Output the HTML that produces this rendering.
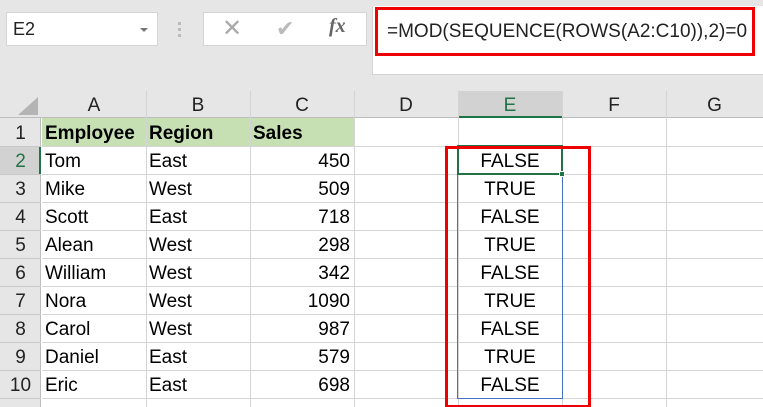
<!DOCTYPE html>
<html><head><meta charset="utf-8"><style>
*{margin:0;padding:0;box-sizing:border-box}
html,body{width:763px;height:407px;overflow:hidden}
body{background:#fff;font-family:"Liberation Sans","Noto Sans CJK SC",sans-serif;position:relative}
.abs{position:absolute}
.cell{position:absolute;height:28px;line-height:32px;font-size:19px;color:#000;white-space:nowrap}
</style></head><body>
<div class="abs" style="left:0;top:0;width:763px;height:91px;background:#e6e6e6"></div>
<div class="abs" style="left:6px;top:12px;width:152px;height:34px;background:#fff;border:1px solid #d4d4d4"></div>
<div class="abs" style="left:13px;top:12px;line-height:34px;font-size:18px;color:#222">E2</div>
<div class="abs" style="left:140px;top:28px;width:0;height:0;border-left:4px solid transparent;border-right:4px solid transparent;border-top:4px solid #777"></div>
<div class="abs" style="left:178px;top:22px;width:3px;height:3px;background:#bbb;box-shadow:0 6px 0 #bbb,0 12px 0 #bbb"></div>
<div class="abs" style="left:203px;top:12px;width:164px;height:34px;background:#fff;border:1px solid #d4d4d4"></div>
<div class="abs" style="left:222px;top:17px;font-size:24px;color:#aaa;line-height:24px">✕</div>
<div class="abs" style="left:276px;top:17px;font-size:22px;color:#bbb;line-height:24px">✔</div>
<div class="abs" style="left:329px;top:15px;font-size:20px;color:#666;font-family:'Liberation Serif',serif;font-style:italic;font-weight:bold">fx</div>
<div class="abs" style="left:372px;top:6px;width:391px;height:69px;background:#fff;border-left:1px solid #d4d4d4;border-bottom:1px solid #d4d4d4"></div>
<div class="abs" style="left:375px;top:7px;width:380px;height:49px;border:3px solid #e00"></div>
<div class="abs" style="left:387px;top:18px;font-size:19px;color:#222;line-height:28px">=MOD(SEQUENCE(ROWS(A2:C10)),2)=0</div>
<div class="abs" style="left:0;top:91px;width:763px;height:27px;background:#e6e6e6;border-bottom:1px solid #bdbdbd"></div>
<div class="abs" style="left:458px;top:91px;width:104px;height:27px;background:#d2d2d2;border-bottom:2px solid #217346"></div>
<div class="abs" style="left:18px;top:97px;width:0;height:0;border-left:20px solid transparent;border-bottom:18px solid #b4b4b4"></div>
<div class="abs" style="left:0;top:118px;width:41px;height:289px;background:#e6e6e6;border-right:1px solid #bdbdbd"></div>
<div class="abs" style="left:0;top:146px;width:41px;height:28px;background:#d2d2d2;border-right:2px solid #217346"></div>
<div class="abs" style="left:42px;top:118px;width:312px;height:28px;background:#c6e0b4"></div>
<div id="g"></div>
<script>
var cols=[42,146,250,354,458,562,666,763],L="ABCDEFG",h="";
for(var i=0;i<7;i++){h+='<div class="cell" style="left:'+cols[i]+'px;top:91px;width:'+(cols[i+1]-cols[i])+'px;height:27px;line-height:30px;text-align:center;font-size:19px;color:'+(i==4?'#217346':'#222')+'">'+L[i]+'</div>';
h+='<div class="abs" style="left:'+(cols[i+1])+'px;top:91px;width:1px;height:316px;background:'+(i<6?'#d4d4d4':'transparent')+'"></div>';}
var d=[["Employee","Region","Sales"],["Tom","East",450],["Mike","West",509],["Scott","East",718],["Alean","West",298],["William","West",342],["Nora","West",1090],["Carol","West",987],["Daniel","East",579],["Eric","East",698]];
for(var r=0;r<11;r++){var t=118+28*r;
h+='<div class="abs" style="left:42px;top:'+(t+28)+'px;width:721px;height:1px;background:#d4d4d4"></div>';
h+='<div class="abs" style="left:0;top:'+(t+28)+'px;width:41px;height:1px;background:#c8c8c8"></div>';
if(r<10){h+='<div class="cell" style="left:0;top:'+t+'px;width:41px;text-align:center;font-size:19px;color:'+(r==1?'#217346':'#222')+'">'+(r+1)+'</div>';
var b=r==0?'font-weight:bold;':'';
h+='<div class="cell" style="'+b+'left:45px;top:'+t+'px">'+d[r][0]+'</div>';
h+='<div class="cell" style="'+b+'left:149px;top:'+t+'px">'+d[r][1]+'</div>';
h+='<div class="cell" style="'+b+(r==0?'left:253px;':'left:250px;width:100px;text-align:right;')+'top:'+t+'px">'+d[r][2]+'</div>';
if(r>0)h+='<div class="cell" style="left:458px;top:'+t+'px;width:104px;text-align:center">'+(r%2?'FALSE':'TRUE')+'</div>';}}
document.getElementById('g').innerHTML=h;
</script>
<div class="abs" style="left:457px;top:146px;width:106px;height:253px;border:1px solid #4472c4"></div>
<div class="abs" style="left:457px;top:145px;width:106px;height:30px;border:2px solid #217346"></div>
<div class="abs" style="left:559px;top:171px;width:6px;height:6px;background:#217346;border:1px solid #fff"></div>
<div class="abs" style="left:445px;top:146px;width:146px;height:262px;border:3px solid #e00"></div>
</body></html>
